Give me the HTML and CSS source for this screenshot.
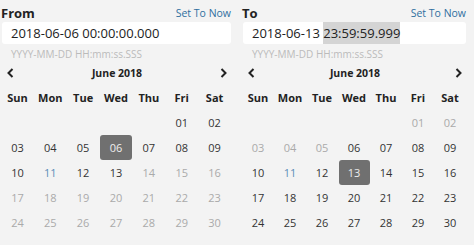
FILE: index.html
```html
<!DOCTYPE html>
<html lang="en">
<head>
    <meta charset="UTF-8">
    <title>Date Range</title>
    <link rel="stylesheet" href="styles.css">
</head>
<body>
    <div class="pickers">
        <div class="panel from">
            <div class="head">
                <span class="label">From</span>
                <a class="now">Set To Now</a>
            </div>
            <div class="field">2018-06-06 00:00:00.000</div>
            <div class="hint">YYYY-MM-DD HH:mm:ss.SSS</div>
            <div class="nav">
                <svg width="7" height="10" viewBox="0 0 7 10"><polyline points="5.5,1 1.5,5 5.5,9" fill="none" stroke="#222" stroke-width="2"/></svg>
                <span class="month">June 2018</span>
                <svg width="7" height="10" viewBox="0 0 7 10"><polyline points="1.5,1 5.5,5 1.5,9" fill="none" stroke="#222" stroke-width="2"/></svg>
            </div>
            <div class="grid days" id="from-grid"></div>
        </div>
        <div class="panel to">
            <div class="head">
                <span class="label">To</span>
                <a class="now">Set To Now</a>
            </div>
            <div class="field">2018-06-13 <span class="sel">23:59:59.999</span></div>
            <div class="hint">YYYY-MM-DD HH:mm:ss.SSS</div>
            <div class="nav">
                <svg width="7" height="10" viewBox="0 0 7 10"><polyline points="5.5,1 1.5,5 5.5,9" fill="none" stroke="#222" stroke-width="2"/></svg>
                <span class="month">June 2018</span>
                <svg width="7" height="10" viewBox="0 0 7 10"><polyline points="1.5,1 5.5,5 1.5,9" fill="none" stroke="#222" stroke-width="2"/></svg>
            </div>
            <div class="grid days" id="to-grid"></div>
        </div>
    </div>

    <script>
        const weekdays = ['Sun', 'Mon', 'Tue', 'Wed', 'Thu', 'Fri', 'Sat'];

        function buildGrid(id, selected, isOff) {
            const grid = document.getElementById(id);
            weekdays.forEach(w => {
                const cell = document.createElement('div');
                cell.className = 'wd';
                cell.textContent = w;
                grid.appendChild(cell);
            });
            // June 2018 starts on a Friday
            for (let i = 0; i < 5; i++) {
                grid.appendChild(document.createElement('div'));
            }
            for (let d = 1; d <= 30; d++) {
                const cell = document.createElement('div');
                cell.className = 'day';
                if (isOff(d)) cell.classList.add('off');
                if (d === 11) cell.classList.add('today');
                if (d === selected) cell.classList.add('picked');
                cell.textContent = String(d).padStart(2, '0');
                grid.appendChild(cell);
            }
        }

        buildGrid('from-grid', 6, d => d > 13);
        buildGrid('to-grid', 13, d => d < 6);
    </script>
</body>
</html>
```

FILE: styles.css
```css
body {
    margin: 0;
    background-color: #f3f3f3;
    font-family: "Open Sans", "DejaVu Sans", sans-serif;
    color: #333;
}
.pickers {
    display: flex;
    gap: 11px;
    padding-left: 1px;
}
.panel.from {
    width: 230px;
}
.panel.to {
    width: 224px;
}
.head {
    display: flex;
    justify-content: space-between;
    align-items: center;
    padding-top: 3px;
    height: 19px;
}
.label {
    font-size: 13px;
    font-weight: 700;
    color: #222;
}
.now {
    font-size: 10.5px;
    color: #2f6f9f;
}
.field {
    background-color: #fff;
    border-radius: 3px;
    height: 22px;
    line-height: 22px;
    padding-left: 9px;
    margin-left: 1px;
    font-size: 13px;
    color: #222;
}
.field .sel {
    background-color: #d4d4d4;
    padding: 2px 0;
}
.hint {
    margin-top: 3px;
    padding-left: 10px;
    line-height: 14px;
    font-size: 10px;
    color: #bbb;
}
.nav {
    display: flex;
    justify-content: space-between;
    align-items: center;
    height: 24px;
    padding: 0 4px 0 6px;
}
.month {
    font-size: 10.5px;
    font-weight: 700;
    color: #222;
}
.grid {
    display: grid;
    grid-template-columns: repeat(7, 1fr);
    grid-auto-rows: 25px;
}
.grid > div {
    display: flex;
    align-items: center;
    justify-content: center;
    font-size: 11px;
}
.wd {
    font-weight: 700;
    color: #222;
}
.day {
    color: #333;
}
.day.off {
    color: #aaa;
}
.day.today {
    color: #5b8db8;
}
.day.picked {
    background-color: #707070;
    color: #eee;
    border-radius: 3px;
    margin: 0 0.5px;
}
```
